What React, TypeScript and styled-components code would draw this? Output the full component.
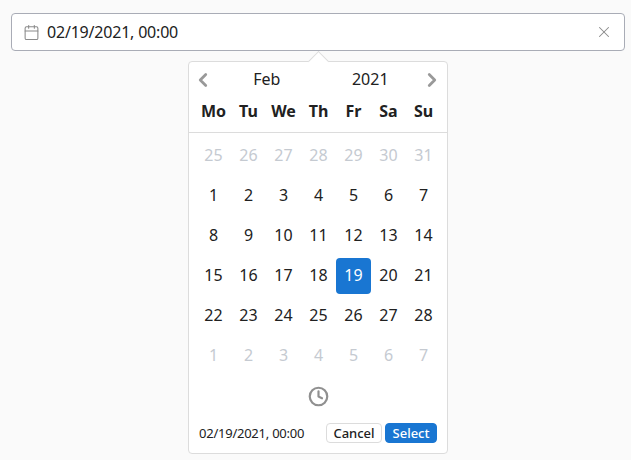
import styled, { createGlobalStyle } from 'styled-components';
import { LuCalendar, LuClock, LuX, LuChevronLeft, LuChevronRight } from 'react-icons/lu';

const GlobalStyle = createGlobalStyle`
  html, body {
    margin: 0;
    background: #fafafa;
    font-family: 'Noto Sans', sans-serif;
    color: #212121;
  }
`;

const Page = styled.div`
  padding: 13px 6px 0 11px;
  height: 460px;
  box-sizing: border-box;
  overflow: hidden;
`;

const Field = styled.div`
  position: relative;
  height: 38px;
  box-sizing: border-box;
  display: flex;
  align-items: center;
  padding: 0 11px 0 11px;
  background: #fff;
  border: 1px solid #a9acb6;
  border-radius: 4px;
  font-size: 16px;
`;

const FieldValue = styled.span`
  flex: 1;
  margin-left: 7px;
  letter-spacing: -0.2px;
`;

const FieldIcon = styled.span`
  display: flex;
  color: #8a8a8a;
`;

const Popup = styled.div`
  position: absolute;
  top: 47px;
  left: 176px;
  width: 260px;
  height: 393px;
  box-sizing: border-box;
  background: #fff;
  border: 1px solid #dcdcdc;
  border-radius: 4px;
  padding: 0 6px;
  display: flex;
  flex-direction: column;

  &::before {
    content: '';
    position: absolute;
    top: -8px;
    left: 122px;
    width: 14px;
    height: 14px;
    background: #fff;
    border-left: 1px solid #dcdcdc;
    border-top: 1px solid #dcdcdc;
    transform: rotate(45deg);
  }
`;

const NavRow = styled.div`
  display: flex;
  align-items: center;
  height: 35px;
  font-size: 16px;
  margin: 0 -2px 0 -3px;
`;

const NavLabel = styled.span`
  flex: 1;
  text-align: center;
  padding: 0 0 2px 2px;
`;

const NavIcon = styled.span`
  display: flex;
  color: #999;
`;

const Days = styled.div`
  display: grid;
  grid-template-columns: repeat(7, 35px);
  margin-left: 1px;
`;

const Weekdays = styled(Days)`
  height: 36px;
  margin: 0 -6px;
  padding: 0 0 7px 7px;
  box-sizing: border-box;
  align-items: center;
  font-weight: 700;
  font-size: 16px;
  text-align: center;
  border-bottom: 1px solid #dcdcdc;
`;

const MonthGrid = styled(Days)`
  margin-top: 3px;
  grid-auto-rows: 40px;
`;

const Day = styled.div<{ $muted?: boolean; $selected?: boolean }>`
  display: flex;
  align-items: center;
  justify-content: center;
  font-size: 16px;
  height: 36px;
  box-sizing: border-box;
  padding-bottom: 2px;
  align-self: center;
  border-radius: 4px;
  color: ${(p) => (p.$selected ? '#fff' : p.$muted ? '#c5cad1' : '#212121')};
  background: ${(p) => (p.$selected ? '#1976d2' : 'transparent')};
`;

const TimeToggle = styled.div`
  display: flex;
  justify-content: center;
  color: #909090;
  margin-top: 10px;
`;

const Footer = styled.div`
  display: flex;
  align-items: center;
  margin-top: 16px;
  padding: 0 4px;
  font-size: 13px;
`;

const FooterValue = styled.span`
  flex: 1;
  letter-spacing: -0.24px;
`;

const ActionButton = styled.button<{ $primary?: boolean }>`
  height: 20px;
  width: ${(p) => (p.$primary ? '52px' : '56px')};
  padding: 0;
  margin-left: 3px;
  font-family: inherit;
  font-size: 13px;
  font-weight: 500;
  border-radius: 4px;
  border: 1px solid ${(p) => (p.$primary ? '#1976d2' : '#dcdcdc')};
  background: ${(p) => (p.$primary ? '#1976d2' : '#fff')};
  color: ${(p) => (p.$primary ? '#fff' : '#212121')};
`;

const weekdays = ['Mo', 'Tu', 'We', 'Th', 'Fr', 'Sa', 'Su'];
const leading = [25, 26, 27, 28, 29, 30, 31];
const month = Array.from({ length: 28 }, (_, i) => i + 1);
const trailing = [1, 2, 3, 4, 5, 6, 7];

const App = () => {
  return (
    <Page>
      <GlobalStyle />
      <Field>
        <FieldIcon>
          <LuCalendar size={17} strokeWidth={1.5} />
        </FieldIcon>
        <FieldValue>02/19/2021, 00:00</FieldValue>
        <FieldIcon>
          <LuX size={18} strokeWidth={1.4} />
        </FieldIcon>
        <Popup>
          <NavRow>
            <NavIcon>
              <LuChevronLeft size={22} strokeWidth={3} />
            </NavIcon>
            <NavLabel>Feb</NavLabel>
            <NavLabel>2021</NavLabel>
            <NavIcon>
              <LuChevronRight size={22} strokeWidth={3} />
            </NavIcon>
          </NavRow>
          <Weekdays>
            {weekdays.map((d) => (
              <div key={d}>{d}</div>
            ))}
          </Weekdays>
          <MonthGrid>
            {leading.map((d) => (
              <Day key={`prev-${d}`} $muted>
                {d}
              </Day>
            ))}
            {month.map((d) => (
              <Day key={d} $selected={d === 19}>
                {d}
              </Day>
            ))}
            {trailing.map((d) => (
              <Day key={`next-${d}`} $muted>
                {d}
              </Day>
            ))}
          </MonthGrid>
          <TimeToggle>
            <LuClock size={21} strokeWidth={2.5} />
          </TimeToggle>
          <Footer>
            <FooterValue>02/19/2021, 00:00</FooterValue>
            <ActionButton>Cancel</ActionButton>
            <ActionButton $primary>Select</ActionButton>
          </Footer>
        </Popup>
      </Field>
    </Page>
  );
};

export default App;
